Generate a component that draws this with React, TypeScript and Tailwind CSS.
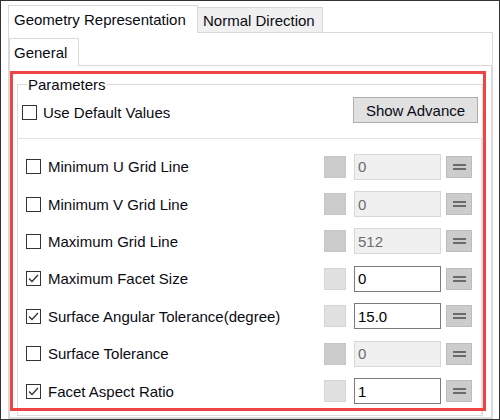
import React from "react";

type Row = {
  label: string;
  checked: boolean;
  value: string;
};

const ROWS: Row[] = [
  { label: "Minimum U Grid Line", checked: false, value: "0" },
  { label: "Minimum V Grid Line", checked: false, value: "0" },
  { label: "Maximum Grid Line", checked: false, value: "512" },
  { label: "Maximum Facet Size", checked: true, value: "0" },
  { label: "Surface Angular Tolerance(degree)", checked: true, value: "15.0" },
  { label: "Surface Tolerance", checked: false, value: "0" },
  { label: "Facet Aspect Ratio", checked: true, value: "1" },
];

function CheckBox({ checked }: { checked: boolean }) {
  return (
    <div className="w-[15px] h-[15px] shrink-0 border border-[#333333] bg-white flex items-center justify-center">
      {checked && (
        <svg width="13" height="13" viewBox="0 0 13 13">
          <path d="M2 6.5 L5 9.5 L11 3" fill="none" stroke="#333333" strokeWidth="1.3" />
        </svg>
      )}
    </div>
  );
}

function EqualsButton() {
  return (
    <div className="w-[26px] h-[22px] shrink-0 bg-[#cccccc] border border-[#bdbdbd] flex flex-col items-center justify-center gap-[2px]">
      <div className="w-[13px] h-[2px] bg-[#6a6a6a]" />
      <div className="w-[13px] h-[2px] bg-[#6a6a6a]" />
    </div>
  );
}

function ParamRow({ row }: { row: Row }) {
  const on = row.checked;
  return (
    <div className="flex items-center h-[37.4px] pl-[8px] pr-[9px]">
      <CheckBox checked={on} />
      <span className="ml-[7px] text-[#0a0a14]">{row.label}</span>
      <div
        className={`ml-auto w-[22px] h-[22px] shrink-0 border ${
          on ? "bg-[#e1e1e1] border-[#d4d4d4]" : "bg-[#cccccc] border-[#c6c6c6]"
        }`}
      />
      <div
        className={`ml-[8px] w-[87px] h-[26px] shrink-0 flex items-center pl-[3px] border ${
          on
            ? "bg-white border-[#7a7a7a] text-[#000000]"
            : "bg-[#f0f0f0] border-[#d8d8d8] text-[#6d6d6d]"
        }`}
      >
        {row.value}
      </div>
      <div className="ml-[5px]">
        <EqualsButton />
      </div>
    </div>
  );
}

export default function App() {
  return (
    <div
      className="relative w-[500px] h-[420px] bg-white border border-[#333333] overflow-hidden flex flex-col text-[15px] leading-none"
      style={{ fontFamily: '"Liberation Sans", Arial, sans-serif' }}
    >
      {/* outer tabs */}
      <div className="flex items-end pl-[7px] pt-[4px] h-[32px]">
        <div className="relative z-10 w-[190px] h-[28px] bg-white border border-b-0 border-[#d9d9d9] flex items-center pl-[5px] text-[#0a0a14]">
          Geometry Representation
        </div>
        <div className="w-[125px] h-[26px] bg-[#f0f0f0] border border-l-0 border-b-0 border-[#d9d9d9] flex items-center pl-[5px] text-[#0a0a14]">
          Normal Direction
        </div>
      </div>

      <div className="-mt-px ml-[7px] w-[485px] flex-1 border border-[#d9d9d9] pt-[5px] flex flex-col">
        {/* inner tab */}
        <div className="relative z-10 w-[70px] h-[28px] -mb-px bg-white border border-b-0 border-[#d9d9d9] flex items-center pl-[4px] text-[#0a0a14]">
          General
        </div>
        <div className="flex-1 border border-[#d9d9d9] pt-[10px] pl-[7px] pr-[8px]">
          <fieldset className="border border-[#dcdcdc] h-[340px]">
            <legend className="ml-[9px] px-[1px] leading-[17px] text-[#0a0a14]">Parameters</legend>

            <div className="flex items-start pl-[4px] pr-[4px] mt-[4px]">
              <div className="mt-[8px] flex items-center">
                <CheckBox checked={false} />
                <span className="ml-[6px] text-[#0a0a14]">Use Default Values</span>
              </div>
              <button className="ml-auto w-[125px] h-[26px] bg-[#e1e1e1] border border-[#adadad] text-[#0a0a14] flex items-center justify-center">
                Show Advance
              </button>
            </div>

            <div className="mt-[15px] border-t border-r border-[#e3e3e3] pt-[9px] h-[300px]">
              {ROWS.map((r) => (
                <ParamRow key={r.label} row={r} />
              ))}
            </div>
          </fieldset>
        </div>
      </div>

      {/* annotation frame */}
      <div className="pointer-events-none absolute left-[9px] top-[70px] w-[476px] h-[340px] border-[3px] border-[#f04444]" />
    </div>
  );
}
